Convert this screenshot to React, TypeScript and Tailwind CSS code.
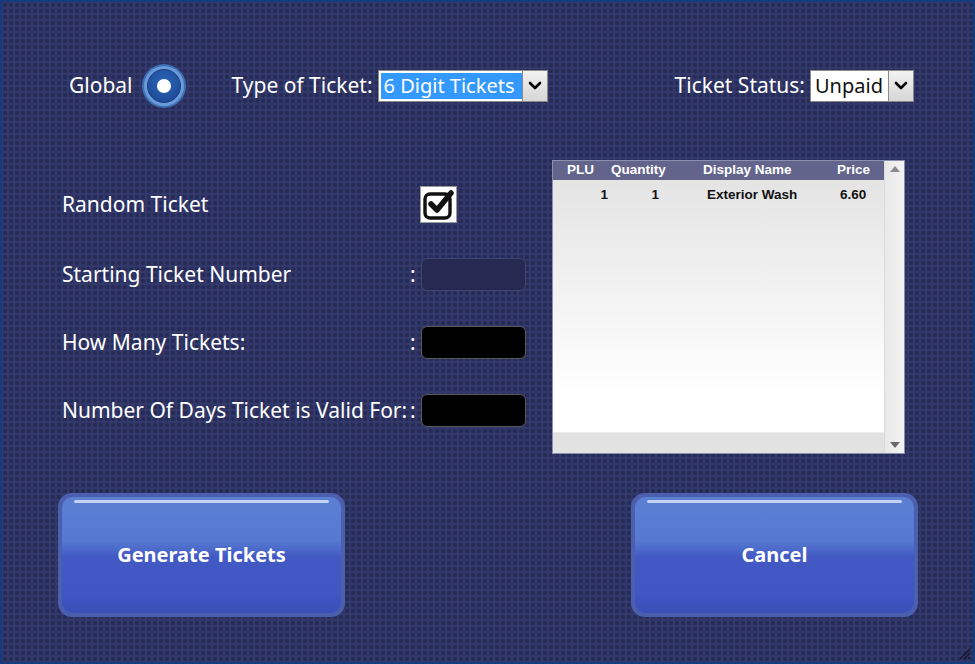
import React from "react";

const font = { fontFamily: '"Noto Sans", "Open Sans", sans-serif' };

function Radio() {
  return (
    <svg width="46" height="46" viewBox="0 0 46 46">
      <defs>
        <radialGradient id="rg" cx="50%" cy="40%" r="60%">
          <stop offset="0%" stopColor="#2d66b8" />
          <stop offset="100%" stopColor="#1d4b97" />
        </radialGradient>
      </defs>
      <circle cx="23" cy="23" r="22" fill="#3d6fb4" />
      <circle cx="23" cy="23" r="20" fill="#6a9ad8" />
      <circle cx="23" cy="23" r="16.5" fill="url(#rg)" stroke="#1a3f80" strokeWidth="1" />
      <circle cx="23" cy="23" r="7" fill="#ffffff" />
    </svg>
  );
}

function Chevron() {
  return (
    <svg width="14" height="10" viewBox="0 0 14 10">
      <path d="M2 2 L7 7 L12 2" fill="none" stroke="#000" strokeWidth="2.6" strokeLinecap="round" strokeLinejoin="round" />
    </svg>
  );
}

function Checkbox() {
  return (
    <div className="w-[37px] h-[37px] bg-white border border-[#9a9a9a] flex items-center justify-center">
      <svg width="33" height="33" viewBox="0 0 33 33">
        <rect x="3" y="6" width="25" height="24" rx="5" fill="white" stroke="#111" strokeWidth="3.4" />
        <path d="M9 16 L15 22 L29 5" fill="none" stroke="#111" strokeWidth="5.5" strokeLinecap="round" strokeLinejoin="round" />
      </svg>
    </div>
  );
}

function BigButton({ label, className }: { label: string; className: string }) {
  return (
    <div className={`h-[124px] rounded-[14px] bg-[#4b5fae] p-[4px] ${className}`}>
      <div className="relative h-full w-full rounded-[11px] overflow-hidden bg-[linear-gradient(to_bottom,#5a7fd3_0%,#5679cf_38%,#4d6bcb_44%,#4259c4_52%,#4056c3_85%,#3a4eb6_100%)] flex items-center justify-center">
        <div className="absolute top-[3px] left-[12px] right-[12px] h-[3px] rounded-full bg-[#c4d2f4]" />
        <span className="text-white font-bold text-[20px]" style={font}>
          {label}
        </span>
      </div>
    </div>
  );
}

export default function App() {
  return (
    <div
      className="relative w-[975px] h-[664px] border-2 border-[#123c7d] bg-[#323869] bg-[radial-gradient(circle,#272b57_1.9px,transparent_2.4px)] bg-[length:6px_6px] flex flex-col text-white overflow-hidden"
      style={font}
    >
      {/* top row */}
      <div className="flex items-center h-[46px] mt-[61px] pl-[67px] pr-[59px] text-[21px]">
        <span>Global</span>
        <div className="ml-[8px]">
          <Radio />
        </div>
        <span className="ml-[45px]">Type of Ticket:</span>
        <div className="ml-[5px] flex h-[32px] w-[170px] border border-[#8a8a8a] bg-white">
          <div className="flex-1 m-[2px] mr-0 bg-[#3399ff] flex items-center pl-[3px] text-[20px] text-white leading-none whitespace-nowrap">
            6 Digit Tickets
          </div>
          <div className="w-[25px] bg-[linear-gradient(to_bottom,#f2f2f2,#d6d6d6)] border-l border-[#8a8a8a] flex items-center justify-center">
            <Chevron />
          </div>
        </div>
        <div className="flex-1" />
        <span>Ticket Status:</span>
        <div className="ml-[5px] flex h-[32px] w-[104px] border border-[#8a8a8a] bg-white">
          <div className="flex-1 flex items-center pl-[4px] text-[20px] text-[#111] leading-none">Unpaid</div>
          <div className="w-[25px] bg-[linear-gradient(to_bottom,#f2f2f2,#d6d6d6)] border-l border-[#8a8a8a] flex items-center justify-center">
            <Chevron />
          </div>
        </div>
      </div>

      {/* middle */}
      <div className="flex mt-[51px]">
        <div className="w-[550px] pl-[60px] pt-[26px] flex flex-col text-[21px]">
          <div className="flex items-center h-[37px]">
            <span className="w-[358px]">Random Ticket</span>
            <Checkbox />
          </div>
          <div className="flex items-center h-[33px] mt-[35px]">
            <span className="w-[347px]">Starting Ticket Number</span>
            <span className="w-[12px] pl-[1px]">:</span>
            <div className="w-[105px] h-[33px] rounded-[6px] bg-[#262a52] border border-[#41466f]" />
          </div>
          <div className="flex items-center h-[33px] mt-[35px]">
            <span className="w-[347px]">How Many Tickets:</span>
            <span className="w-[12px] pl-[1px]">:</span>
            <div className="w-[105px] h-[33px] rounded-[6px] bg-black border border-[#5a5a5a]" />
          </div>
          <div className="flex items-center h-[33px] mt-[35px]">
            <span className="w-[347px] whitespace-nowrap">Number Of Days Ticket is Valid For:</span>
            <span className="w-[12px] pl-[1px]">:</span>
            <div className="w-[105px] h-[33px] rounded-[6px] bg-black border border-[#5a5a5a]" />
          </div>
        </div>

        {/* grid */}
        <div
          className="w-[353px] h-[294px] border border-[#8b8fb0] bg-white flex text-[13.5px] font-bold"
          style={{ fontFamily: '"Liberation Sans", Arial, sans-serif' }}
        >
          <div className="flex-1 flex flex-col">
            <div className="h-[19px] bg-[#62648c] flex items-center text-white">
              <div className="w-[57px] pl-[14px]">PLU</div>
              <div className="w-[70px] pl-[1px]">Quantity</div>
              <div className="w-[135px] pl-[23px]">Display Name</div>
              <div className="flex-1 pl-[22px]">Price</div>
            </div>
            <div className="flex-1 bg-[linear-gradient(to_bottom,#e4e4e4,#ffffff_85%)] text-[#111]">
              <div className="h-[30px] flex items-center">
                <div className="w-[57px] text-right pr-[2px]">1</div>
                <div className="w-[70px] text-right pr-[21px]">1</div>
                <div className="w-[135px] pl-[27px]">Exterior Wash</div>
                <div className="flex-1 pl-[25px]">6.60</div>
              </div>
            </div>
            <div className="h-[21px] bg-[#e2e2e2] border-t border-[#ececec]" />
          </div>
          <div className="w-[20px] bg-[linear-gradient(to_right,#e9e9e9,#f3f3f3)] border-l border-[#dcdcdc] flex flex-col items-center justify-between py-[5px]">
            <svg width="10" height="6" viewBox="0 0 10 6">
              <path d="M0 6 L5 0 L10 6 Z" fill="#8a8a8a" />
            </svg>
            <svg width="10" height="6" viewBox="0 0 10 6">
              <path d="M0 0 L5 6 L10 0 Z" fill="#6a6a6a" />
            </svg>
          </div>
        </div>
      </div>

      {/* buttons */}
      <div className="flex mt-[39px] pl-[56px] pr-[55px]">
        <BigButton label="Generate Tickets" className="w-[287px]" />
        <div className="flex-1" />
        <BigButton label="Cancel" className="w-[287px]" />
      </div>

      {/* resize grip */}
      <svg className="absolute right-[2px] bottom-[2px]" width="14" height="14" viewBox="0 0 14 14">
        <path d="M3 13 L13 3 M7 13 L13 7 M11 13 L13 11" stroke="#15182e" strokeWidth="1.6" />
      </svg>
    </div>
  );
}
